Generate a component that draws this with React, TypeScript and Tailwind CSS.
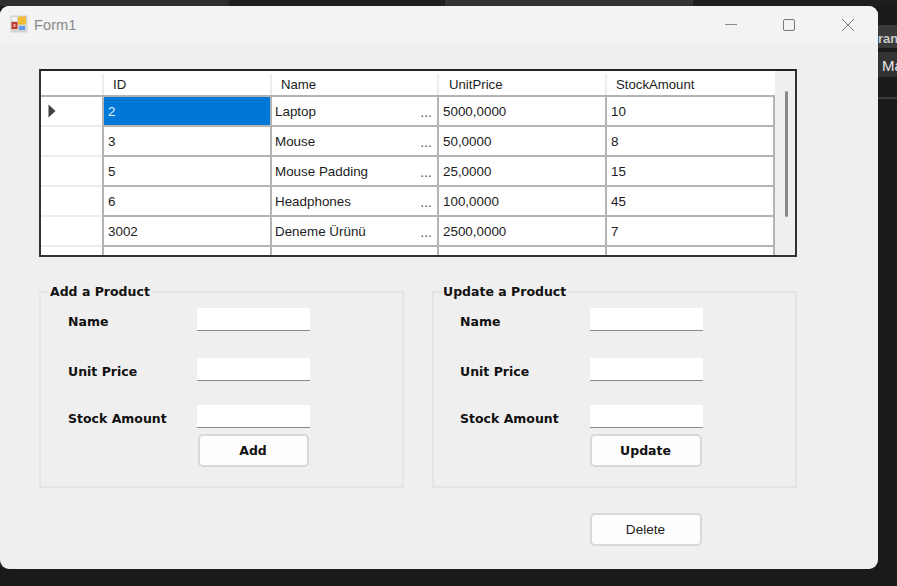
const font = "font-['Liberation_Sans',Arial,sans-serif]";
const boldFont = "font-['DejaVu_Sans',Verdana,sans-serif]";

const columns = ['ID', 'Name', 'UnitPrice', 'StockAmount'];

const rows = [
  ['2', 'Laptop', '5000,0000', '10'],
  ['3', 'Mouse', '50,0000', '8'],
  ['5', 'Mouse Padding', '25,0000', '15'],
  ['6', 'Headphones', '100,0000', '45'],
  ['3002', 'Deneme Ürünü', '2500,0000', '7'],
];

function AppIcon() {
  return (
    <svg width="18" height="18" viewBox="0 0 18 18" className="shrink-0">
      <rect x="0.5" y="0.5" width="17" height="17" fill="#d4d4d4" />
      <rect x="2" y="2" width="5" height="4" fill="#f2f2f2" />
      <rect x="1.5" y="7" width="6" height="7" fill="#c0392b" />
      <rect x="3.5" y="9" width="2" height="3" fill="#f3b2a8" />
      <rect x="8" y="1.5" width="8" height="8" fill="#f2bd33" />
      <rect x="9" y="11" width="6" height="4" fill="#5b9be8" />
    </svg>
  );
}

function GridRow({ cells, selected }: { cells: string[]; selected?: boolean }) {
  return (
    <div className="flex h-[30px] shrink-0 text-[13.4px] text-[#1c1c1c]">
      <div className="w-[61px] flex items-center pl-[7px] border-b-2 border-[#ededed]">
        {selected && (
          <svg width="8" height="14" viewBox="0 0 8 14">
            <path d="M0.5 0.5 L7.5 7 L0.5 13.5 Z" fill="#404040" />
          </svg>
        )}
      </div>
      <div
        className={`w-[168px] flex items-center pl-[4px] pt-[2px] border-l-2 border-b-2 border-[#b4b4b4] ${
          selected ? 'bg-[#0078d7] text-[#e6f2fc]' : ''
        }`}
      >
        {cells[0]}
      </div>
      <div className="w-[167px] flex items-center justify-between pl-[3px] pr-[5px] pt-[2px] border-l-2 border-b-2 border-[#b4b4b4]">
        <span>{cells[1]}</span>
        {cells[1] && <span className="text-[14px] text-[#555]">...</span>}
      </div>
      <div className="w-[168px] flex items-center pl-[4px] pt-[2px] border-l-2 border-b-2 border-[#b4b4b4]">{cells[2]}</div>
      <div className="w-[170px] flex items-center pl-[4px] pt-[2px] border-x-2 border-b-2 border-[#b4b4b4]">{cells[3]}</div>
    </div>
  );
}

function Field({ label, labelWidth, last }: { label: string; labelWidth: string; last?: boolean }) {
  return (
    <div className={`flex items-start h-[25px] ${last ? '' : 'mb-[25px]'}`}>
      <span className={`text-[12.5px] font-bold leading-[27px] text-[#111] ${labelWidth} ${boldFont}`}>{label}</span>
      <div className="w-[113px] h-[23px] bg-white rounded-t-[1px] border-b border-[#8a8a8a]" />
    </div>
  );
}

function ProductBox({
  title,
  action,
  inset,
  labelWidth,
  buttonWidth,
}: {
  title: string;
  action: string;
  inset: string;
  labelWidth: string;
  buttonWidth: string;
}) {
  return (
    <div className={`relative w-[365px] h-[197px] border-2 border-[#e4e4e4] pt-[15px] ${inset}`}>
      <span className={`absolute -top-[10px] left-[7px] bg-[#efefef] px-[2px] text-[12.5px] font-bold leading-[18px] text-[#111] ${boldFont}`}>
        {title}
      </span>
      <Field label="Name" labelWidth={labelWidth} />
      <Field label="Unit Price" labelWidth={labelWidth} />
      <div className="-mt-[3px]">
        <Field label="Stock Amount" labelWidth={labelWidth} last />
      </div>
      <button className={`block ml-[130px] mt-[4px] h-[33px] pt-[2px] pr-[1px] bg-[#fdfdfd] border-2 border-[#d8d8d8] rounded-[5px] text-[12.5px] font-bold text-[#111] ${buttonWidth} ${boldFont}`}>
        {action}
      </button>
    </div>
  );
}

export default function App() {
  return (
    <div className={`w-[897px] h-[586px] overflow-hidden bg-[#1a1a1a] relative ${font}`}>
      {/* stuff of the IDE behind the form */}
      <div className="flex h-[6px]">
        <div className="w-[229px] bg-[#2e2e2e]" />
        <div className="w-[216px] bg-[#1e1e1e]" />
        <div className="w-[248px] bg-[#333]" />
        <div className="flex-1 bg-[#1e1e1e]" />
      </div>
      <div className="absolute right-0 top-[25px] w-[19px] h-[23px] bg-[#3a3a3a] overflow-hidden text-[13px] font-bold leading-[28px] text-[#c8c8c8]">
        ran
      </div>
      <div className="absolute right-0 top-[52px] w-[19px] h-[25px] bg-[#333] overflow-hidden pl-[4px] text-[15px] leading-[27px] text-[#e8e8e8]">
        Ma
      </div>
      <div className="absolute right-0 top-[97px] w-[19px] h-[2px] bg-[#3a3a3a]" />

      {/* form window */}
      <div className="absolute left-0 top-[6px] w-[878px] h-[563px] rounded-[9px] overflow-hidden bg-[#efefef] flex flex-col">
        <div className="h-[38px] shrink-0 bg-[#f3f3f3] flex items-center pl-[10px] pb-[2px]">
          <AppIcon />
          <span className="ml-[6px] pt-[3px] text-[14.7px] text-[#8a8a8a]">Form1</span>
          <div className="ml-auto flex items-center pt-[2px]">
            <svg width="14" height="14" viewBox="0 0 14 14" className="mr-[44px]">
              <path d="M1 6.5h12" stroke="#888" strokeWidth="1" fill="none" />
            </svg>
            <svg width="14" height="14" viewBox="0 0 14 14" className="mr-[45px]">
              <rect x="1.5" y="1.5" width="11" height="11" rx="1.5" stroke="#777" strokeWidth="1" fill="none" />
            </svg>
            <svg width="14" height="14" viewBox="0 0 14 14" className="mr-[23px]">
              <path d="M1 1l12 12M13 1L1 13" stroke="#777" strokeWidth="1" fill="none" />
            </svg>
          </div>
        </div>

        <div className="pl-[39px] pt-[25px]">
          {/* data grid */}
          <div className="relative w-[758px] h-[188px] border-2 border-[#333] border-t-[#222] overflow-hidden bg-[#efefef]">
            <div className="flex flex-col w-[734px] bg-white">
              <div className="flex h-[26px] shrink-0 pt-[3px] text-[13.2px] text-[#1c1c1c] border-b-2 border-[#b4b4b4]">
                <div className="w-[61px]" />
                {columns.map((c, i) => (
                  <div
                    key={c}
                    className={`flex items-center border-l-2 border-[#ececec] ${
                      i === 1 ? 'w-[167px]' : 'w-[168px]'
                    } ${i === 2 ? 'pl-[10px]' : 'pl-[9px]'}`}
                  >
                    {c}
                  </div>
                ))}
              </div>
              {rows.map((r, i) => (
                <GridRow key={r[0]} cells={r} selected={i === 0} />
              ))}
              <GridRow cells={['', '', '', '']} />
            </div>
            {/* scroll thumb */}
            <div className="absolute left-[744px] top-[20px] w-[3px] h-[126px] bg-[#8a8a8a] rounded-full" />
          </div>

          <div className="flex gap-[28px] mt-[34px]">
            <ProductBox title="Add a Product" action="Add" inset="pl-[27px]" labelWidth="w-[129px]" buttonWidth="w-[111px]" />
            <ProductBox title="Update a Product" action="Update" inset="pl-[26px]" labelWidth="w-[130px]" buttonWidth="w-[112px]" />
          </div>

          <button className="block ml-[551px] mt-[25px] w-[112px] h-[33px] pt-[2px] pr-[1px] bg-[#fdfdfd] border-2 border-[#d8d8d8] rounded-[5px] text-[13.6px] text-[#1c1c1c]">
            Delete
          </button>
        </div>
      </div>
    </div>
  );
}
